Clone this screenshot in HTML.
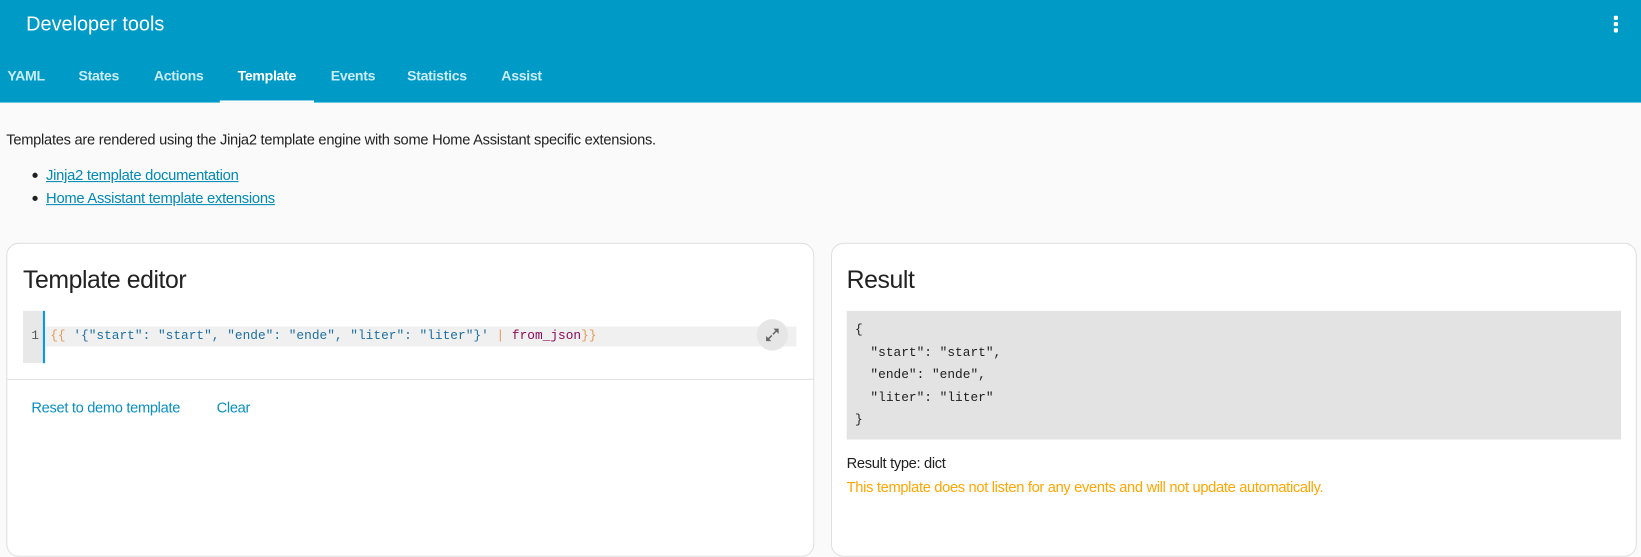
<!DOCTYPE html>
<html><head><meta charset="utf-8"><style>
*{box-sizing:border-box;margin:0;padding:0}
html,body{width:1641px;height:525px;overflow:hidden;background:#fafafa}
#w{position:absolute;left:0;top:0;width:1568px;height:502px;transform:scale(1.04656);transform-origin:0 0;font-family:"Liberation Sans",sans-serif;color:#212121}
.hdr{position:absolute;left:0;top:0;width:1568px;height:98px;background:#009ac7}
.title{position:absolute;left:25px;top:13px;font-size:19px;color:#fff}
.tab{position:absolute;top:65px;font-size:13.5px;font-weight:bold;color:#c9ecf6;letter-spacing:-0.3px}
.tab.act{color:#fff}
.ul{position:absolute;left:210px;top:96px;width:90px;height:2px;background:#fff}
.dots{position:absolute;left:1542px;top:15px;width:4px}
.dots i{display:block;width:4px;height:4px;background:#fff;border-radius:1px;margin-bottom:2px}
.p{position:absolute;left:6px;top:125px;font-size:14px;letter-spacing:-0.25px}
.li{position:absolute;left:44px;font-size:14.1px;color:#0288b5;text-decoration:underline;letter-spacing:-0.25px}
.bul{position:absolute;left:31px;width:5px;height:5px;border-radius:50%;background:#212121}
.card{position:absolute;top:232px;height:300px;background:#fff;border:1px solid #e0e0e0;border-radius:12px}
.h{position:absolute;top:255px;font-size:23.7px;color:#212121;letter-spacing:-0.4px}
.mono{font-family:"Liberation Mono",monospace}
.t{font-size:14px;letter-spacing:-0.3px;position:absolute}
</style></head><body><div id="w">
<div class="hdr">
<div class="title">Developer tools</div>
<div class="tab" style="left:7px">YAML</div>
<div class="tab" style="left:75px">States</div>
<div class="tab" style="left:147px">Actions</div>
<div class="tab act" style="left:227px">Template</div>
<div class="tab" style="left:316px">Events</div>
<div class="tab" style="left:389px">Statistics</div>
<div class="tab" style="left:479px">Assist</div>
<div class="ul"></div>
<div class="dots"><i></i><i></i><i></i></div>
</div>
<div class="p">Templates are rendered using the Jinja2 template engine with some Home Assistant specific extensions.</div>
<div class="bul" style="top:165px"></div><div class="li" style="top:159px">Jinja2 template documentation</div>
<div class="bul" style="top:187px"></div><div class="li" style="top:181px">Home Assistant template extensions</div>

<div class="card" style="left:6px;width:772px"></div>
<div class="h" style="left:22px">Template editor</div>
<div style="position:absolute;left:22px;top:297px;width:19px;height:50px;background:#e8e8e8"></div>
<div style="position:absolute;left:41px;top:297px;width:2px;height:50px;background:#039be5"></div>
<div style="position:absolute;left:43px;top:312px;width:718px;height:19px;background:#f0f0f0"></div>
<div class="mono" style="position:absolute;left:30px;top:314px;color:#555;font-size:12px">1</div>
<div class="mono" style="position:absolute;left:48px;top:314px;white-space:pre;font-size:12.25px"><span style="color:#e59a56">{{</span> <span style="color:#1e6fa0">'{"start": "start", "ende": "ende", "liter": "liter"}'</span> <span style="color:#e59a56">|</span> <span style="color:#8b0b55">from_json</span><span style="color:#e59a56">}}</span></div>
<div style="position:absolute;left:723px;top:305px;width:30px;height:30px;border-radius:50%;background:#e6e6e6"></div>
<svg style="position:absolute;left:730px;top:312px" width="16" height="16" viewBox="0 0 16 16"><path d="M9 2h5v5l-2-2-3 3-1-1 3-3zM7 14H2V9l2 2 3-3 1 1-3 3z" fill="#666"/></svg>
<div style="position:absolute;left:7px;top:362px;width:770px;height:1px;background:#e0e0e0"></div>
<div class="t" style="left:30px;top:381px;color:#0a8fc0">Reset to demo template</div>
<div class="t" style="left:207px;top:381px;color:#0a8fc0">Clear</div>

<div class="card" style="left:794px;width:770px"></div>
<div class="h" style="left:809px">Result</div>
<div style="position:absolute;left:809px;top:297px;width:740px;height:123px;background:#e3e3e3"></div>
<div class="mono" style="position:absolute;left:817px;top:305px;line-height:21.5px;white-space:pre;font-size:12.25px">{
  "start": "start",
  "ende": "ende",
  "liter": "liter"
}</div>
<div class="t" style="left:809px;top:434px">Result type: dict</div>
<div class="t" style="left:809px;top:457px;color:#ffa600">This template does not listen for any events and will not update automatically.</div>
</div></body></html>
